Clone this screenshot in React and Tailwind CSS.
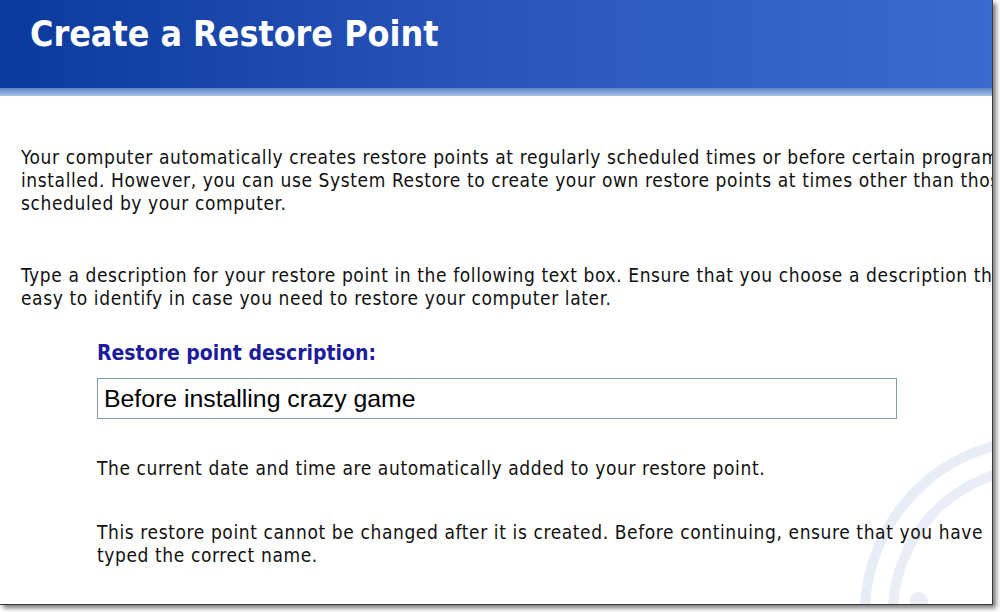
const FONT = "font-['DejaVu_Sans_Condensed','DejaVu_Sans',sans-serif] font-stretch-condensed"

const INTRO = [
  'Your computer automatically creates restore points at regularly scheduled times or before certain programs are',
  'installed. However, you can use System Restore to create your own restore points at times other than those',
  'scheduled by your computer.',
]

const TYPE_HINT = [
  'Type a description for your restore point in the following text box. Ensure that you choose a description that is',
  'easy to identify in case you need to restore your computer later.',
]

const WARNING = [
  'This restore point cannot be changed after it is created. Before continuing, ensure that you have',
  'typed the correct name.',
]

function Lines({ lines }) {
  return (
    <div className="text-[19px] leading-[23px] tracking-[0.6px] text-[#111]">
      {lines.map(l => (
        <p key={l} className="whitespace-nowrap">{l}</p>
      ))}
    </div>
  )
}

function Watermark() {
  return (
    <svg className="absolute inset-0 w-full h-full pointer-events-none" viewBox="0 0 993 605">
      <circle cx="1040" cy="615" r="174" fill="none" stroke="#e8ecf4" strokeWidth="10" />
      <circle cx="1040" cy="615" r="146" fill="none" stroke="#eaedf5" strokeWidth="10" />
      <circle cx="920" cy="602" r="9" fill="#eaedf5" />
    </svg>
  )
}

export default function App() {
  return (
    <div className="w-[1000px] h-[612px] bg-white">
      <div className={`relative w-[993px] h-[605px] bg-white overflow-hidden border-r border-b border-[#3a3a3a] shadow-[3px_3px_5px_rgba(0,0,0,0.55)] ${FONT}`}>
        <Watermark />

        {/* Header */}
        <div className="relative h-[88px] bg-gradient-to-r from-[#0a399d] via-[#2a56bc] to-[#3a69cf] pl-[30px] pt-[16px]">
          <h1 className="text-[35.5px] leading-none font-bold text-white">Create a Restore Point</h1>
        </div>
        <div className="relative h-[8px] bg-gradient-to-b from-[#5d86c2] to-[#a9c2e6]" />

        <div className="relative pl-[21px] pt-[50px]">
          <Lines lines={INTRO} />
          <div className="mt-[49px]">
            <Lines lines={TYPE_HINT} />
          </div>

          <div className="pl-[76px] mt-[31px]">
            <p className="text-[21px] leading-[24px] font-bold text-[#1c1c9c]">Restore point description:</p>
            <div className="mt-[13px] w-[800px] h-[41px] border border-[#7f9db9] bg-white flex items-center pl-[6px]">
              <span className="font-['Liberation_Sans',Arial,sans-serif] font-stretch-normal text-[24.8px] text-black">
                Before installing crazy game
              </span>
            </div>

            <div className="mt-[38px]">
              <Lines lines={['The current date and time are automatically added to your restore point.']} />
            </div>
            <div className="mt-[41px]">
              <Lines lines={WARNING} />
            </div>
          </div>
        </div>
      </div>
    </div>
  )
}
